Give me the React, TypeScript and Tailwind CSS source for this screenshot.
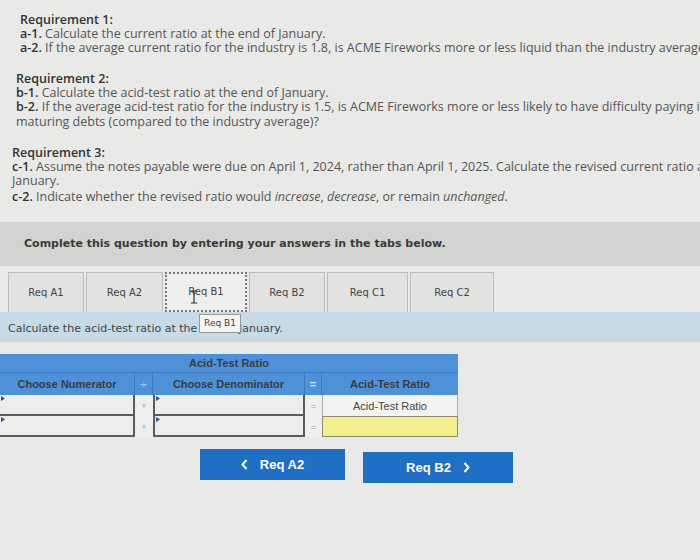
import React from 'react';

const tabs = [
  { label: 'Req A1', w: 'w-[76px]' },
  { label: 'Req A2', w: 'w-[77px]' },
  { label: 'Req B1', w: 'w-[82px]', active: true },
  { label: 'Req B2', w: 'w-[76px]' },
  { label: 'Req C1', w: 'w-[81px]' },
  { label: 'Req C2', w: 'w-[84px]' },
];

function Marker() {
  return (
    <svg className="absolute left-[1px] top-[1px]" width="5" height="5" viewBox="0 0 5 5">
      <path d="M0 0 L4 2.5 L0 5 Z" fill="#2d4f8a" />
    </svg>
  );
}

function Chevron({ dir }: { dir: 'left' | 'right' }) {
  return (
    <svg width="7" height="11" viewBox="0 0 7 11">
      <path
        d={dir === 'left' ? 'M5.5 1 L1.5 5.5 L5.5 10' : 'M1.5 1 L5.5 5.5 L1.5 10'}
        stroke="white"
        strokeWidth="2"
        fill="none"
      />
    </svg>
  );
}

function InputRow({ last }: { last?: boolean }) {
  return (
    <div className="flex h-[21px]">
      <div className="relative w-[135px] border-b-2 border-r-2 border-[#5a5a5a] bg-[#ededeb]">
        <Marker />
      </div>
      <div className="flex w-[18px] items-center justify-center bg-[#efefed] text-[9px] text-[#9aa]">+</div>
      <div className="relative w-[152px] border-b-2 border-l-2 border-r-2 border-[#5a5a5a] bg-[#ededeb]">
        <Marker />
      </div>
      <div className="flex w-[17px] items-center justify-center bg-[#efefed] text-[9px] text-[#9aa]">=</div>
      {last ? (
        <div className="w-[136px] border border-[#8a8a70] bg-[#f2ef8c]" />
      ) : (
        <div className="flex w-[136px] items-center justify-center border-x border-[#aaa] bg-[#f3f3f1] text-[11px] text-[#444]">
          Acid-Test Ratio
        </div>
      )}
    </div>
  );
}

export default function App() {
  return (
    <div className="h-[560px] w-[700px] overflow-hidden bg-[#e9e9e7] font-['Open_Sans',sans-serif] text-[12.5px] leading-[14px] text-[#555]">
      {/* Requirements */}
      <div className="overflow-hidden whitespace-nowrap pt-[13px]">
        <div className="pl-[20px]">
          <div className="font-semibold text-[#333]">Requirement 1:</div>
          <div><b className="font-semibold text-[#333]">a-1.</b> Calculate the current ratio at the end of January.</div>
          <div><b className="font-semibold text-[#333]">a-2.</b> If the average current ratio for the industry is 1.8, is ACME Fireworks more or less liquid than the industry average?</div>
        </div>
        <div className="mt-[17px] pl-[16px]">
          <div className="font-semibold text-[#333]">Requirement 2:</div>
          <div><b className="font-semibold text-[#333]">b-1.</b> Calculate the acid-test ratio at the end of January.</div>
          <div><b className="font-semibold text-[#333]">b-2.</b> If the average acid-test ratio for the industry is 1.5, is ACME Fireworks more or less likely to have difficulty paying its</div>
          <div className="mt-[1px]">maturing debts (compared to the industry average)?</div>
        </div>
        <div className="mt-[17px] pl-[12px]">
          <div className="font-semibold text-[#333]">Requirement 3:</div>
          <div><b className="font-semibold text-[#333]">c-1.</b> Assume the notes payable were due on April 1, 2024, rather than April 1, 2025. Calculate the revised current ratio at the end of</div>
          <div>January.</div>
          <div className="mt-[2px]"><b className="font-semibold text-[#333]">c-2.</b> Indicate whether the revised ratio would <i>increase</i>, <i>decrease</i>, or remain <i>unchanged</i>.</div>
        </div>
      </div>

      {/* Banner */}
      <div className="mt-[18px] flex h-[44px] items-center bg-[#d3d3d1] pl-[24px] font-['DejaVu_Sans',sans-serif] text-[11px] font-bold text-[#3a3a3a]">
        Complete this question by entering your answers in the tabs below.
      </div>

      {/* Tabs */}
      <div className="mt-[6px] flex gap-[2px] pl-[8px] font-['DejaVu_Sans',sans-serif] text-[10px] text-[#444]">
        {tabs.map((t) => (
          <div
            key={t.label}
            className={`${t.w} relative flex h-[40px] items-center justify-center ${
              t.active
                ? 'border-2 border-dotted border-[#777] bg-[#eeeeec]'
                : 'border border-b-0 border-[#bdbdbb] bg-[#e2e2e0]'
            }`}
          >
            {t.label}
            {t.active && (
              <svg className="absolute left-[23px] top-[16px]" width="8" height="14" viewBox="0 0 8 14">
                <path d="M1 1 H7 M4 1 V13 M1 13 H7" stroke="#333" strokeWidth="1.2" fill="none" />
              </svg>
            )}
          </div>
        ))}
      </div>

      {/* Instruction bar */}
      <div className="flex h-[30px] items-center bg-[#c6dbe5] pl-[8px] pt-[4px] font-['DejaVu_Sans',sans-serif] text-[11px] text-[#444]">
        <span className="relative">
          Calculate the acid-test ratio at the end of January.
          <span className="absolute left-[191px] top-[-8px] w-[42px] border border-[#999] bg-[#f4f4f2] py-[3px] text-center text-[9px] leading-[11px] text-[#444]">
            Req B1
          </span>
        </span>
      </div>

      {/* Table */}
      <div className="mt-[12px] w-[458px] font-['Liberation_Sans',sans-serif] text-[11px] font-bold text-[#3c3c3c]">
        <div className="flex h-[19px] items-center justify-center border-b border-[#3b78c0] bg-[#4d91d9]">
          Acid-Test Ratio
        </div>
        <div className="flex h-[22px] bg-[#4d91d9]">
          <div className="flex w-[135px] items-center justify-center border-r border-[#3b78c0]">Choose Numerator</div>
          <div className="flex w-[18px] items-center justify-center border-r border-[#3b78c0] text-[#9cc4ee]">÷</div>
          <div className="flex w-[152px] items-center justify-center border-r border-[#3b78c0]">Choose Denominator</div>
          <div className="flex w-[17px] items-center justify-center border-r border-[#3b78c0] text-[#cfe2f6]">=</div>
          <div className="flex w-[136px] items-center justify-center">Acid-Test Ratio</div>
        </div>
        <div className="font-normal">
          <InputRow />
          <InputRow last />
        </div>
      </div>

      {/* Nav buttons */}
      <div className="mt-[12px] flex gap-[18px] pl-[200px] font-['Liberation_Sans',sans-serif] text-[13px] font-bold text-white">
        <button className="flex h-[31px] w-[145px] items-center justify-center gap-[12px] bg-[#1f6fc6]">
          <Chevron dir="left" />
          <span>Req A2</span>
        </button>
        <button className="mt-[3px] flex h-[31px] w-[150px] items-center justify-center gap-[12px] bg-[#1f6fc6]">
          <span>Req B2</span>
          <Chevron dir="right" />
        </button>
      </div>
    </div>
  );
}
